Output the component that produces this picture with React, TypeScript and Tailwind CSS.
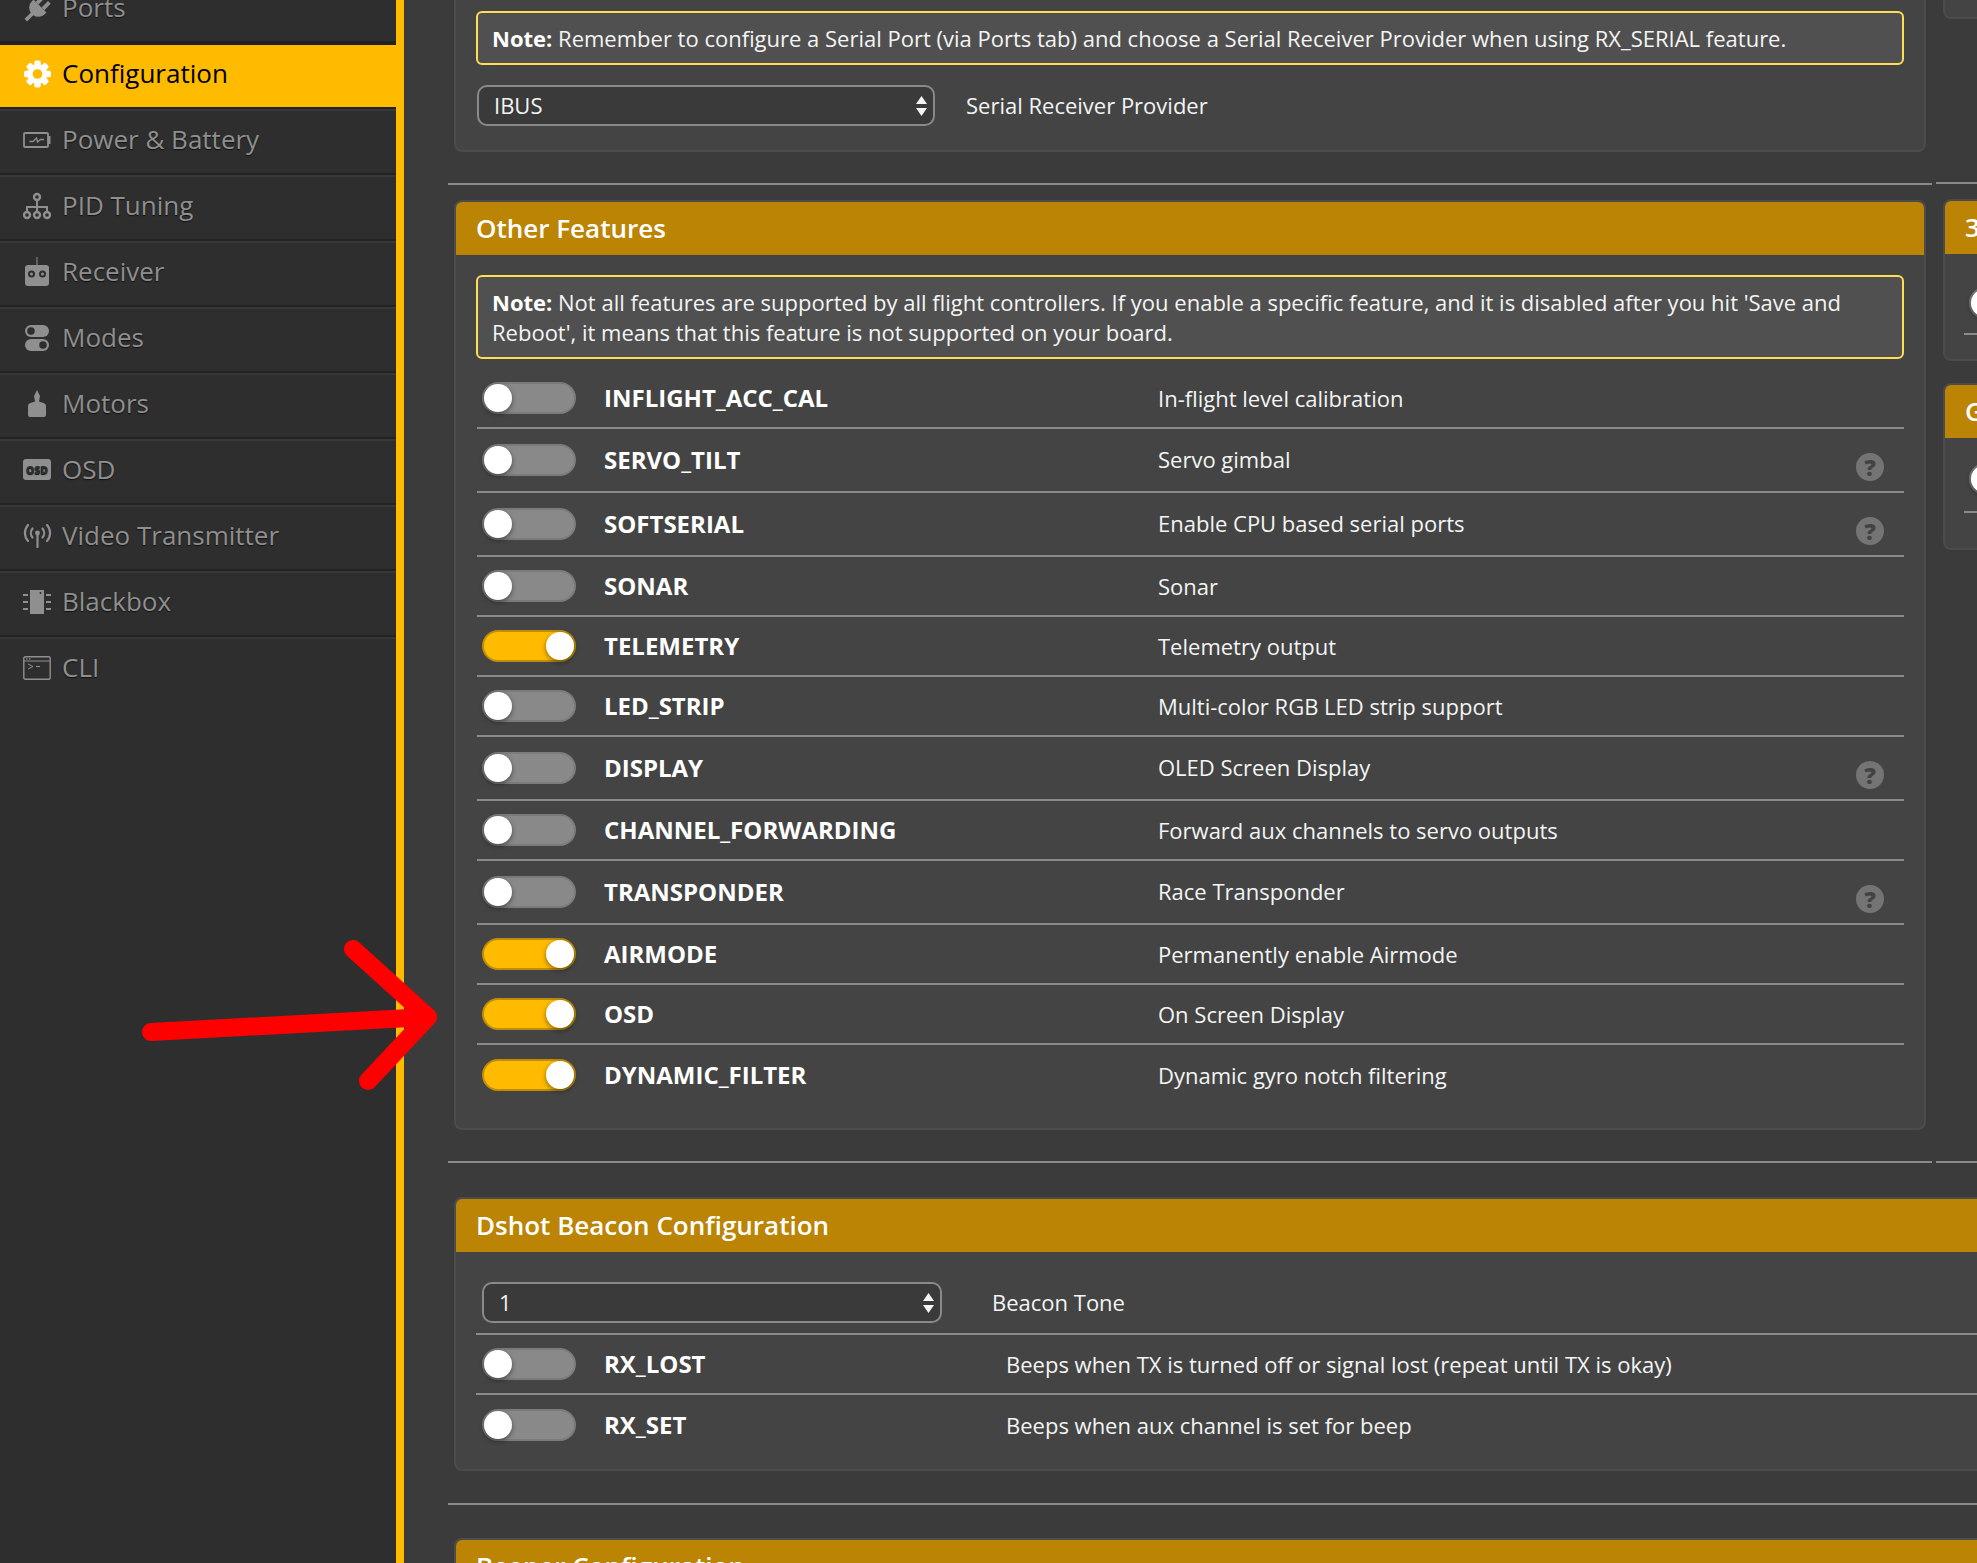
import * as React from 'react'
import clsx from 'clsx'

const FONT = "font-['Open_Sans','Liberation_Sans',sans-serif]"

function IconPorts() {
  return (
    <svg viewBox="0 0 28 28" className="-mx-[3px] mt-[3px] h-[34px] w-[34px] shrink-0" fill="currentColor">
      <g transform="rotate(45 14 14)">
        <path d="M9 3h3.200v7.500H9zM15.800 3H19v7.500h-3.200z" />
        <path d="M6.500 10.500h15v2a7.500 7.500 0 0 1-6 7.300V27h-3v-7.200a7.500 7.500 0 0 1-6-7.300z" />
      </g>
    </svg>
  )
}

function IconGear() {
  return (
    <svg viewBox="0 0 28 28" className="h-[28px] w-[29px]" fill="#fff">
      {[0, 45, 90, 135, 180, 225, 270, 315].map(a => (
        <rect key={a} x="10.800" y="0.500" width="6.400" height="7" rx="1.800" transform={`rotate(${a} 14 14)`} />
      ))}
      <circle cx="14" cy="14" r="10" />
      <circle cx="14" cy="14" r="4.800" fill="#ffbb00" />
    </svg>
  )
}

function IconBattery() {
  return (
    <svg viewBox="0 0 28 16" className="h-[16px] w-[28px]" fill="none" stroke="currentColor">
      <rect x="1" y="1" width="24" height="14" rx="1" strokeWidth="1.800" />
      <rect x="25" y="4" width="2.500" height="8" fill="currentColor" stroke="none" />
      <path d="M6.500 9.500h3.500l3.500-3.500 1 4 3-2.500h3.500" strokeWidth="1.300" />
    </svg>
  )
}

function IconTree() {
  return (
    <svg viewBox="0 0 28 28" className="h-[28px] w-[28px]" fill="none" stroke="currentColor" strokeWidth="2.400">
      <circle cx="14" cy="5" r="3" />
      <circle cx="4" cy="23" r="3" />
      <circle cx="14" cy="23" r="3" />
      <circle cx="24" cy="23" r="3" />
      <path d="M14 8v12M4 20v-5h20v5" strokeWidth="2" />
    </svg>
  )
}

function IconReceiver() {
  return (
    <svg viewBox="0 0 24 29" className="h-[29px] w-[24px]">
      <path fill="currentColor" d="M11.500 0h1v9h-1z" />
      <rect y="8" width="24" height="21" rx="3" fill="currentColor" />
      <circle cx="6.500" cy="17" r="3.500" fill="#2e2e2e" />
      <circle cx="17.500" cy="17" r="3.500" fill="#2e2e2e" />
      <circle cx="6.500" cy="17" r="1.500" fill="currentColor" />
      <circle cx="17.500" cy="17" r="1.500" fill="currentColor" />
    </svg>
  )
}

function IconModes() {
  return (
    <svg viewBox="0 0 24 26" className="h-[26px] w-[24px]">
      <rect width="24" height="12" rx="6" fill="currentColor" />
      <circle cx="6" cy="6" r="3.800" fill="#2e2e2e" />
      <rect y="14" width="24" height="12" rx="6" fill="currentColor" />
      <circle cx="18" cy="20" r="3.800" fill="#2e2e2e" />
    </svg>
  )
}

function IconMotor() {
  return (
    <svg viewBox="0 0 18 27" className="h-[27px] w-[18px]" fill="currentColor">
      <path d="M9 0l3 6-1 5.500 4.500 1.500a3 3 0 0 1 2.500 3v9a2 2 0 0 1-2 2H2a2 2 0 0 1-2-2v-9a3 3 0 0 1 2.500-3L7 11.500 6 6z" />
    </svg>
  )
}

function IconOsd() {
  return (
    <svg viewBox="0 0 28 21" className="h-[21px] w-[28px]">
      <rect width="28" height="21" rx="3" fill="currentColor" />
      <text
        x="14"
        y="14.500"
        textAnchor="middle"
        fontSize="10.500"
        fontWeight="800"
        fontFamily="'Open Sans', sans-serif"
        fill="#2e2e2e"
      >
        OSD
      </text>
    </svg>
  )
}

function IconVtx() {
  return (
    <svg viewBox="0 0 29 24" className="h-[24px] w-[29px]" fill="none" stroke="currentColor" strokeWidth="2.200" strokeLinecap="round">
      <circle cx="14.500" cy="9" r="2.400" fill="currentColor" stroke="none" />
      <path d="M14.500 10v13" />
      <path d="M9.500 4.500a7 7 0 0 0 0 9M19.500 4.500a7 7 0 0 1 0 9" />
      <path d="M5 1a12 12 0 0 0 0 16M24 1a12 12 0 0 1 0 16" />
    </svg>
  )
}

function IconBlackbox() {
  return (
    <svg viewBox="0 0 30 24" className="h-[24px] w-[30px]">
      <path fill="currentColor" d="M8 0h14v24H8z" />
      <circle cx="18.500" cy="3" r="1" fill="#2e2e2e" />
      <path stroke="currentColor" strokeWidth="2" d="M1 5h5M1 12h5M1 19h5M24 5h5M24 12h5M24 19h5" />
    </svg>
  )
}

function IconCli() {
  return (
    <svg viewBox="0 0 28 24" className="h-[24px] w-[28px]" fill="none" stroke="currentColor">
      <rect x="0.800" y="0.800" width="26.400" height="22.400" rx="1.500" strokeWidth="1.400" />
      <path d="M1 5h26" strokeWidth="1" />
      <path d="M3 2.800h1.500M6 2.800h1.500" strokeWidth="1.200" />
      <path d="M5 8l5 2.500-5 2.500M13 10.500h4" strokeWidth="1" />
    </svg>
  )
}

const navItems = [
  { label: 'Ports', icon: <IconPorts /> },
  { label: 'Configuration', icon: <IconGear />, active: true },
  { label: 'Power & Battery', icon: <IconBattery /> },
  { label: 'PID Tuning', icon: <IconTree /> },
  { label: 'Receiver', icon: <IconReceiver /> },
  { label: 'Modes', icon: <IconModes /> },
  { label: 'Motors', icon: <IconMotor /> },
  { label: 'OSD', icon: <IconOsd /> },
  { label: 'Video Transmitter', icon: <IconVtx /> },
  { label: 'Blackbox', icon: <IconBlackbox /> },
  { label: 'CLI', icon: <IconCli /> }
]

function Sidebar() {
  return (
    <aside className="h-full w-[404px] shrink-0 border-r-[8px] border-[#ffbb00] bg-[#2e2e2e]">
      <nav className="-mt-[23px]">
        {navItems.map(item => (
          <div
            key={item.label}
            className={clsx(
              'flex h-[66px] items-center border-b-[2px] border-t-[2px] pb-[5px] text-[26px]',
              item.active
                ? 'border-b-[#222222] border-t-[#222222] bg-[#ffbb00] text-black'
                : 'border-b-[#232323] border-t-[#383838] text-[#8f8f8f] [text-shadow:0_1px_1px_#111]',
              item.label === 'CLI' && 'border-b-transparent'
            )}
          >
            <span className="flex w-[62px] shrink-0 items-center justify-center pl-[12px]">{item.icon}</span>
            <span>{item.label}</span>
          </div>
        ))}
      </nav>
    </aside>
  )
}

function Hr({ className }: { className?: string }) {
  return <div className={clsx('h-[2px] bg-[#8a8a8a]', className)} />
}

function Panel({ title, className, children }: { title?: string; className?: string; children?: React.ReactNode }) {
  return (
    <section className={clsx('overflow-hidden rounded-lg border-2 border-[#4b4c4b] bg-[#434443]', className)}>
      {title && (
        <h2 className="flex h-[53px] items-center whitespace-nowrap bg-[#bb8404] pb-[1px] pl-[20px] text-[26px] font-semibold text-white">
          {title}
        </h2>
      )}
      {children}
    </section>
  )
}

function Note({ className, children }: { className?: string; children: React.ReactNode }) {
  return (
    <div
      className={clsx(
        '-ml-[1px] rounded-md border-2 border-[#ffdd55] bg-[#505050] pl-[14px] pr-[13px] text-[22px] leading-[30px] text-[#f4f4f4]',
        className
      )}
    >
      <strong className="font-bold text-white">Note:</strong> {children}
    </div>
  )
}

function Toggle({ on }: { on?: boolean }) {
  return (
    <span
      className={clsx(
        'flex h-[32px] w-[94px] shrink-0 items-center rounded-full border-2',
        on ? 'justify-end border-[#c08d08] bg-[#ffbb00]' : 'justify-start border-[#7b7b7b] bg-[#898989]'
      )}
    >
      <span className="h-[28px] w-[28px] rounded-full bg-white shadow-[0_2px_5px_rgba(0,0,0,0.45)]" />
    </span>
  )
}

function Help() {
  return (
    <span className="mt-[14px] ml-auto mr-[20px] flex h-[28px] w-[28px] shrink-0 items-center justify-center rounded-full bg-[#747474] text-[23px] font-extrabold text-[#434343]">
      ?
    </span>
  )
}

interface FeatureRowProps {
  name: string
  desc: string
  on?: boolean
  help?: boolean
  last?: boolean
  nameWidth: string
  indent?: string
}

function FeatureRow({ name, desc, on, help, last, nameWidth, indent = 'ml-[5px]' }: FeatureRowProps) {
  return (
    <div
      className={clsx(
        'flex items-center text-[22px] text-[#f4f4f4]',
        help ? 'h-[64px]' : 'h-[60px]',
        !last && 'border-b-2 border-[#8a8a8a]'
      )}
    >
      <span className={clsx('mr-[28px]', indent)}>
        <Toggle on={on} />
      </span>
      <span className={clsx('shrink-0 text-[24px] font-bold leading-none text-white', nameWidth)}>{name}</span>
      <span className={clsx(help && '-mt-[2px]')}>{desc}</span>
      {help && <Help />}
    </div>
  )
}

function FakeSelect({ value, className }: { value: string; className?: string }) {
  return (
    <div
      className={clsx(
        'flex h-[41px] shrink-0 items-center justify-between rounded-[10px] border-2 border-[#8a8a8a] bg-[#3a3a3a] pl-[15px] pr-[6px] text-[22px] text-[#f4f4f4]',
        className
      )}
    >
      <span>{value}</span>
      <svg viewBox="0 0 11 20" className="h-[20px] w-[11px]" fill="#f4f4f4">
        <path d="M5.500 0L11 8H0zM5.500 20L0 12h11z" />
      </svg>
    </div>
  )
}

const features = [
  { name: 'INFLIGHT_ACC_CAL', desc: 'In-flight level calibration' },
  { name: 'SERVO_TILT', desc: 'Servo gimbal', help: true },
  { name: 'SOFTSERIAL', desc: 'Enable CPU based serial ports', help: true },
  { name: 'SONAR', desc: 'Sonar' },
  { name: 'TELEMETRY', desc: 'Telemetry output', on: true },
  { name: 'LED_STRIP', desc: 'Multi-color RGB LED strip support' },
  { name: 'DISPLAY', desc: 'OLED Screen Display', help: true },
  { name: 'CHANNEL_FORWARDING', desc: 'Forward aux channels to servo outputs' },
  { name: 'TRANSPONDER', desc: 'Race Transponder', help: true },
  { name: 'AIRMODE', desc: 'Permanently enable Airmode', on: true },
  { name: 'OSD', desc: 'On Screen Display', on: true },
  { name: 'DYNAMIC_FILTER', desc: 'Dynamic gyro notch filtering', on: true, last: true }
]

function SideStub({ title, className, rowClass }: { title: string; className: string; rowClass: string }) {
  return (
    <Panel title={title} className={className}>
      <div className={rowClass}>
        <div className="flex h-full items-center border-b-2 border-[#8a8a8a] pl-[5px]">
          <Toggle />
        </div>
      </div>
    </Panel>
  )
}

// the red annotation arrow that sits over sidebar and panel edge
function RedArrow() {
  return (
    <svg
      className="pointer-events-none absolute left-[140px] top-[940px] h-[160px] w-[300px]"
      viewBox="140 940 300 160"
      fill="none"
      stroke="#fe0000"
      strokeWidth="18"
      strokeLinecap="round"
      strokeLinejoin="round"
    >
      <path d="M151 1032L428 1017" />
      <path d="M353 949L428 1017L368 1081" />
    </svg>
  )
}

export default function App() {
  return (
    <div className={clsx('relative flex h-[1563px] w-[1977px] overflow-hidden bg-[#3a3b3a]', FONT)}>
      <Sidebar />
      <main className="min-w-0 flex-1 overflow-hidden pl-[44px]">
        <div className="-mt-[20px] grid grid-cols-[1484px_1fr] gap-x-[4px]">
          <div>
            <Panel className="mx-[6px]">
              <div className="pl-[21px] pr-[20px] pt-[29px] pb-[24px]">
                <Note className="whitespace-pre py-[10px]">
                  Remember to configure a Serial Port (via Ports tab) and choose a Serial Receiver Provider when using RX_SERIAL feature.
                </Note>
                <div className="mt-[20px] flex items-center text-[22px] text-[#f4f4f4]">
                  <FakeSelect value="IBUS" className="w-[458px]" />
                  <span className="-mt-[1px] ml-[31px]">Serial Receiver Provider</span>
                </div>
              </div>
            </Panel>
            <Hr className="mt-[31px]" />
            <Panel title="Other Features" className="mx-[6px] mt-[15px]">
              <div className="pl-[21px] pr-[20px] pt-[20px] pb-[23px]">
                <Note className="mb-[10px] py-[10px]">
                  Not all features are supported by all flight controllers. If you enable a specific feature, and it is disabled after you hit 'Save and Reboot', it means that this feature is not supported on your board.
                </Note>
                {features.map(f => (
                  <FeatureRow key={f.name} {...f} nameWidth="w-[554px]" />
                ))}
              </div>
            </Panel>
            <Hr className="mt-[31px]" />
          </div>
          <div className="flex flex-col">
            <div className="ml-[7px] h-[39px] w-[60px] rounded-lg border-2 border-[#4b4c4b] bg-[#434443]" />
            <Hr className="mt-[163px]" />
            <SideStub title="3D" className="ml-[7px] mt-[15px] w-[60px]" rowClass="mt-[19px] mb-[24px] ml-[19px] h-[62px]" />
            <SideStub title="GPS" className="ml-[7px] mt-[22px] w-[60px]" rowClass="mt-[9px] mb-[35px] ml-[19px] h-[66px]" />
            <Hr className="mt-auto" />
          </div>
        </div>
        <Panel title="Dshot Beacon Configuration" className="ml-[6px] mt-[34px] w-[1600px]">
          <div className="pl-[20px] pb-[14px]">
            <div className="flex items-center border-b-2 border-[#8a8a8a] pt-[30px] pb-[10px] text-[22px] text-[#f4f4f4]">
              <FakeSelect value="1" className="ml-[6px] w-[460px]" />
              <span className="ml-[50px]">Beacon Tone</span>
            </div>
            <FeatureRow name="RX_LOST" desc="Beeps when TX is turned off or signal lost (repeat until TX is okay)" nameWidth="w-[402px]" indent="ml-[6px]" />
            <FeatureRow name="RX_SET" desc="Beeps when aux channel is set for beep" nameWidth="w-[402px]" indent="ml-[6px]" last />
          </div>
        </Panel>
        <Hr className="mt-[32px]" />
        <Panel title="Beeper Configuration" className="ml-[6px] mt-[33px] w-[1600px]" />
      </main>
      <RedArrow />
    </div>
  )
}
